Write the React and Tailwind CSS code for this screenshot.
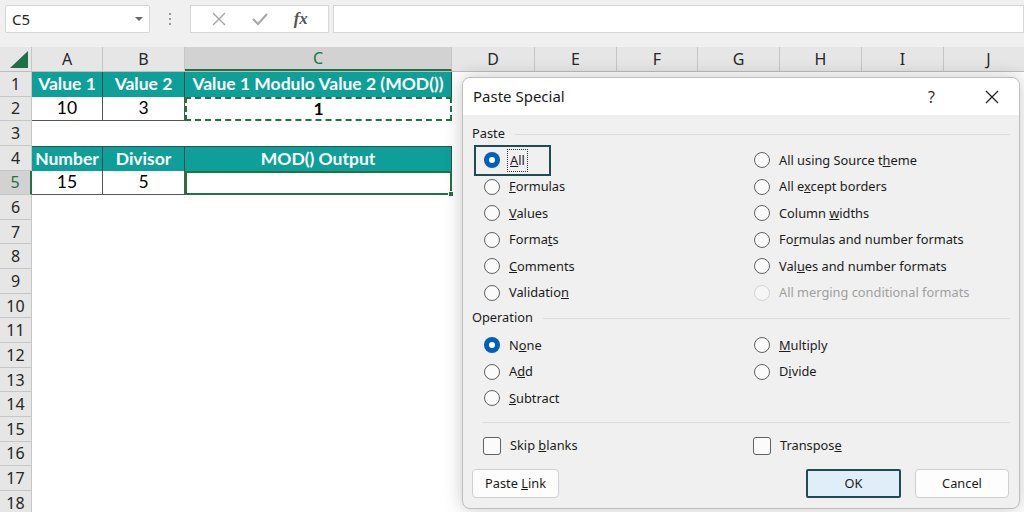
import React from 'react';

const COLS = [
    { key: 'A', w: 71 },
    { key: 'B', w: 82 },
    { key: 'C', w: 267 },
    { key: 'D', w: 83 },
    { key: 'E', w: 82 },
    { key: 'F', w: 81 },
    { key: 'G', w: 82 },
    { key: 'H', w: 82 },
    { key: 'I', w: 82 },
    { key: 'J', w: 90 },
];

const ROWS = Array.from({ length: 18 }, (_, i) => i + 1);

function Radio({ checked, disabled }) {
    if (checked) {
        return (
            <span className="w-4 h-4 rounded-full bg-[#005fb8] flex items-center justify-center shrink-0">
                <span className="w-[6px] h-[6px] rounded-full bg-white" />
            </span>
        );
    }
    return (
        <span
            className={`w-4 h-4 rounded-full border shrink-0 ${disabled ? 'border-[#d4d4d4] bg-[#f6f6f6]' : 'border-[#616161] bg-[#fbfbfb]'}`}
        />
    );
}

function Option({ label, checked, disabled, box, focus }) {
    return (
        <div className="flex items-center gap-[9px] h-[26.5px]">
            {box ? (
                <span className="w-[18px] h-[18px] rounded-[3px] border border-[#616161] bg-[#fbfbfb] shrink-0" />
            ) : (
                <Radio checked={checked} disabled={disabled} />
            )}
            <span className={`${disabled ? 'text-[#a0a0a0]' : 'text-[#1b1b1b]'} ${focus ? 'outline outline-1 outline-dotted outline-[#333] outline-offset-[1px] px-[1px]' : ''}`}>
                {label}
            </span>
        </div>
    );
}

function Cell({ w, children, className = '' }) {
    return (
        <div style={{ width: w }} className={`h-full shrink-0 flex items-center justify-center ${className}`}>
            {children}
        </div>
    );
}

function Grid() {
    const teal = 'bg-[#0e9f99] text-white font-bold';
    return (
        <div className="flex flex-col" style={{ fontFamily: 'Lato, "Open Sans", sans-serif' }}>
            {/* column headers */}
            <div className="flex h-[25px] bg-[#e6e6e6] border-b border-[#bdbdbd]">
                <div className="w-[32px] h-full relative border-r border-[#c6c6c6] shrink-0">
                    <svg className="absolute right-[3px] bottom-[3px]" width="18" height="17" viewBox="0 0 18 17">
                        <polygon points="18,0 18,17 0,17" fill="#1e7145" />
                    </svg>
                </div>
                {COLS.map((c) => (
                    <div
                        key={c.key}
                        style={{ width: c.w, fontFamily: '"Noto Sans", sans-serif' }}
                        className={`h-full shrink-0 flex items-center justify-center text-[16px] border-r border-[#c6c6c6] ${c.key === 'C' ? 'bg-[#d2d2d2] text-[#217346] border-b-2 border-b-[#217346]' : 'text-[#262626]'}`}
                    >
                        {c.key}
                    </div>
                ))}
            </div>
            {ROWS.map((r) => (
                <div key={r} className="flex h-[24.65px]">
                    <div
                        className={`w-[32px] h-full shrink-0 flex items-center justify-center text-[16px] border-b border-r border-[#c6c6c6] ${r === 5 ? 'bg-[#d2d2d2] text-[#217346] border-r-2 border-r-[#217346]' : 'bg-[#e6e6e6] text-[#262626]'}`}
                        style={{ fontFamily: '"Noto Sans", sans-serif' }}
                    >
                        {r}
                    </div>
                    {r === 1 && (
                        <>
                            <Cell w={71} className={`${teal} text-[17.5px] border-r border-[#2d4f4f]`}>Value 1</Cell>
                            <Cell w={82} className={`${teal} text-[17.5px] border-r border-[#2d4f4f]`}>Value 2</Cell>
                            <Cell w={267} className={`${teal} text-[17.5px] border-r border-[#2d4f4f]`}>Value 1 Modulo Value 2 (MOD())</Cell>
                        </>
                    )}
                    {r === 2 && (
                        <>
                            <Cell w={71} className="text-[17.5px] text-black border-r border-b border-[#555]">10</Cell>
                            <Cell w={82} className="text-[17.5px] text-black border-r border-b border-[#555]">3</Cell>
                            <Cell w={267} className="text-[17.5px] text-black font-bold border-2 border-dashed border-[#217346]">1</Cell>
                        </>
                    )}
                    {r === 4 && (
                        <>
                            <Cell w={71} className={`${teal} text-[17.5px] border-r border-[#2d4f4f] border-t border-t-[#2d4f4f]`}>Number</Cell>
                            <Cell w={82} className={`${teal} text-[17.5px] border-r border-[#2d4f4f] border-t border-t-[#2d4f4f]`}>Divisor</Cell>
                            <Cell w={267} className={`${teal} text-[17.5px] border-r border-[#2d4f4f] border-t border-t-[#2d4f4f]`}>MOD() Output</Cell>
                        </>
                    )}
                    {r === 5 && (
                        <>
                            <Cell w={71} className="text-[17.5px] text-black border-r border-b border-[#555]">15</Cell>
                            <Cell w={82} className="text-[17.5px] text-black border-r border-b border-[#555]">5</Cell>
                            <Cell w={267} className="relative border-2 border-[#217346]">
                                <span className="absolute -right-[4px] -bottom-[4px] w-[6px] h-[6px] bg-[#217346] border border-white" />
                            </Cell>
                        </>
                    )}
                    <div className="flex-1 bg-white" />
                </div>
            ))}
        </div>
    );
}

function Toolbar() {
    return (
        <div className="h-[47px] bg-[#f0f0f0] flex items-start pt-[5px] pl-[5px]" style={{ fontFamily: '"Noto Sans", sans-serif' }}>
            <div className="w-[145px] h-[28px] bg-white border border-[#d6d6d6] rounded-[2px] flex items-center justify-between px-[6px]">
                <span className="text-[15px] text-[#262626]">C5</span>
                <svg width="8" height="5" viewBox="0 0 8 5"><polygon points="0,0 8,0 4,4" fill="#666" /></svg>
            </div>
            <div className="w-[40px] h-[28px] flex flex-col items-center justify-center gap-[3px]">
                <span className="w-[2px] h-[2px] bg-[#9a9a9a]" />
                <span className="w-[2px] h-[2px] bg-[#9a9a9a]" />
                <span className="w-[2px] h-[2px] bg-[#9a9a9a]" />
            </div>
            <div className="w-[139px] h-[28px] bg-white border border-[#d6d6d6] flex items-center justify-around px-[8px]">
                <svg width="16" height="16" viewBox="0 0 16 16"><path d="M2 2 L14 14 M14 2 L2 14" stroke="#a6a6a6" strokeWidth="1.4" /></svg>
                <svg width="18" height="16" viewBox="0 0 18 16"><path d="M2 8 L7 13 L16 3" stroke="#a6a6a6" strokeWidth="2" fill="none" /></svg>
                <span className="text-[17px] italic text-[#555] font-semibold" style={{ fontFamily: '"Liberation Serif", serif' }}>fx</span>
            </div>
            <div className="ml-[4px] flex-1 h-[28px] bg-white border border-[#d6d6d6]" />
        </div>
    );
}

function Dialog() {
    return (
        <div
            className="absolute left-[462px] top-[77px] w-[558px] h-[432px] rounded-[8px] border border-[#bdbdbd] bg-[#f0f0f0] shadow-[0_0_18px_rgba(0,0,0,0.22)] overflow-hidden flex flex-col text-[12.8px]"
            style={{ fontFamily: '"Noto Sans", sans-serif' }}
        >
            <div className="h-[37px] bg-white flex items-center pl-[10px] pr-[20px] shrink-0">
                <span className="text-[15px] text-[#1b1b1b]">Paste Special</span>
                <span className="ml-auto text-[16px] text-[#333] mr-[50px]">?</span>
                <svg width="14" height="14" viewBox="0 0 14 14"><path d="M1 1 L13 13 M13 1 L1 13" stroke="#222" strokeWidth="1.3" /></svg>
            </div>
            <div className="flex-1 flex flex-col px-[9px] pt-[10px]">
                <div className="flex items-center gap-[10px] h-[18px]">
                    <span className="text-[#1b1b1b]">Paste</span>
                    <span className="flex-1 h-px bg-[#dcdcdc]" />
                </div>
                <div className="grid grid-cols-[281px_1fr] mt-[4px]">
                    <div className="flex flex-col pl-[12px]">
                        <div className="relative">
                            <span className="absolute -left-[10px] -top-[2px] w-[77px] h-[31px] border-2 border-[#1e4d4f]" />
                            <Option label={<><u>A</u>ll</>} checked focus />
                        </div>
                        <Option label={<><u>F</u>ormulas</>} />
                        <Option label={<><u>V</u>alues</>} />
                        <Option label={<>Forma<u>t</u>s</>} />
                        <Option label={<><u>C</u>omments</>} />
                        <Option label={<>Validatio<u>n</u></>} />
                    </div>
                    <div className="flex flex-col pl-[1px]">
                        <Option label={<>All using Source t<u>h</u>eme</>} />
                        <Option label={<>All e<u>x</u>cept borders</>} />
                        <Option label={<>Column <u>w</u>idths</>} />
                        <Option label={<>Fo<u>r</u>mulas and number formats</>} />
                        <Option label={<>Val<u>u</u>es and number formats</>} />
                        <Option label="All merging conditional formats" disabled />
                    </div>
                </div>
                <div className="flex items-center gap-[10px] h-[18px] mt-[3px]">
                    <span className="text-[#1b1b1b]">Operation</span>
                    <span className="flex-1 h-px bg-[#dcdcdc]" />
                </div>
                <div className="grid grid-cols-[281px_1fr] mt-[5px]">
                    <div className="flex flex-col pl-[12px]">
                        <Option label={<>N<u>o</u>ne</>} checked />
                        <Option label={<>A<u>d</u>d</>} />
                        <Option label={<><u>S</u>ubtract</>} />
                    </div>
                    <div className="flex flex-col pl-[1px]">
                        <Option label={<><u>M</u>ultiply</>} />
                        <Option label={<>D<u>i</u>vide</>} />
                    </div>
                </div>
                <div className="h-px bg-[#dcdcdc] ml-[10px] mt-[10px]" />
                <div className="grid grid-cols-[281px_1fr] mt-[10px]">
                    <div className="pl-[11px]">
                        <Option label={<>Skip <u>b</u>lanks</>} box />
                    </div>
                    <div>
                        <Option label={<>Transpos<u>e</u></>} box />
                    </div>
                </div>
                <div className="flex items-center mt-[10px]">
                    <button className="w-[87px] h-[29px] bg-[#fdfdfd] border border-[#d0d0d0] rounded-[4px] text-[#1b1b1b]">
                        Paste <u>L</u>ink
                    </button>
                    <button className="ml-auto w-[95px] h-[29px] bg-[#e0eef9] border-2 border-[#1e4d4f] rounded-[2px] text-[#1b1b1b]">
                        OK
                    </button>
                    <button className="ml-[14px] mr-[1px] w-[94px] h-[29px] bg-[#fdfdfd] border border-[#d0d0d0] rounded-[4px] text-[#1b1b1b]">
                        Cancel
                    </button>
                </div>
            </div>
        </div>
    );
}

export default function App() {
    return (
        <div className="w-[1024px] h-[512px] overflow-hidden relative bg-white">
            <Toolbar />
            <Grid />
            <Dialog />
        </div>
    );
}
